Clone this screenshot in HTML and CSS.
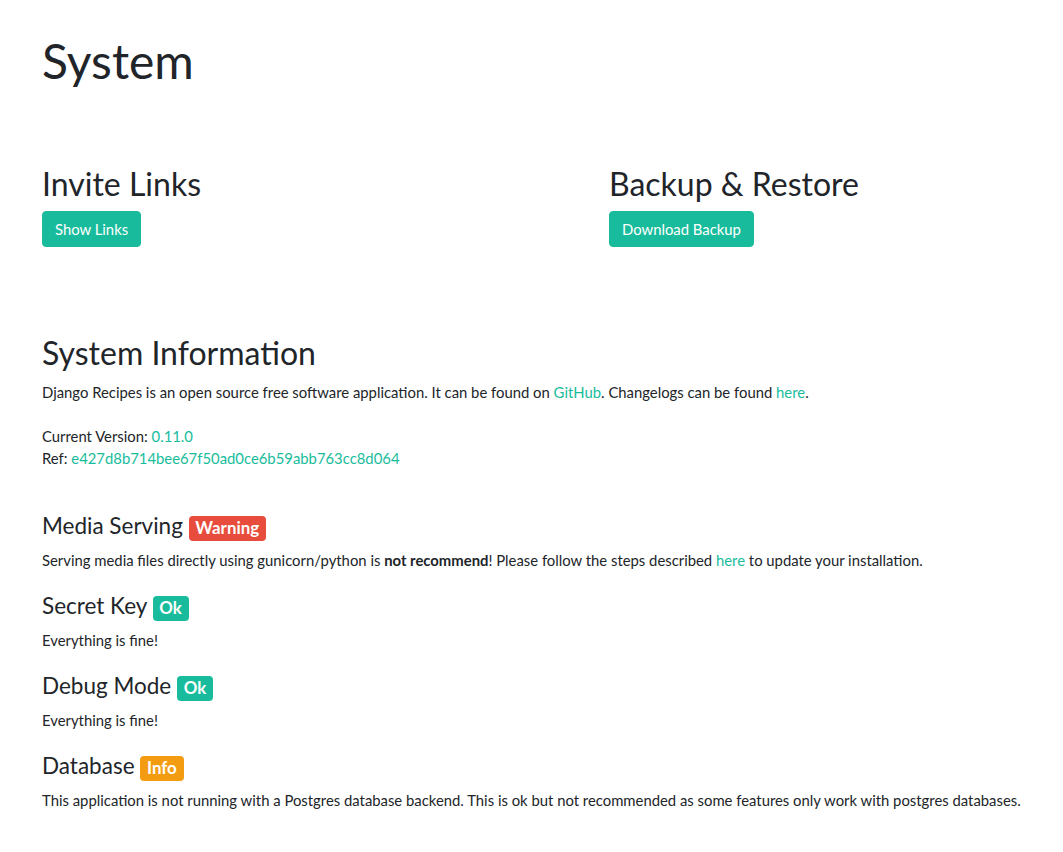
FILE: index.html
```html
<!DOCTYPE html>
<html lang="en">
<head>
<meta charset="utf-8">
<title>System</title>
<link rel="stylesheet" href="styles.css">
</head>
<body>
<main class="page">
  <h1 class="title">System</h1>

  <div class="top-row">
    <section class="col">
      <h3 class="h3">Invite Links</h3>
      <a class="btn" href="#">Show Links</a>
    </section>
    <section class="col">
      <h3 class="h3">Backup &amp; Restore</h3>
      <a class="btn" href="#">Download Backup</a>
    </section>
  </div>

  <section class="info">
    <h3 class="h3">System Information</h3>
    <p class="intro">Django Recipes is an open source free software application. It can be found on <a href="#" class="link">GitHub</a>. Changelogs can be found <a href="#" class="link">here</a>.</p>
    <p class="version">Current Version: <a href="#" class="link">0.11.0</a><br>Ref: <a href="#" class="link">e427d8b714bee67f50ad0ce6b59abb763cc8d064</a></p>
  </section>

  <section class="check first">
    <h4 class="h4">Media Serving <span class="badge badge-danger">Warning</span></h4>
    <p class="text">Serving media files directly using gunicorn/python is <b>not recommend</b>! Please follow the steps described <a href="#" class="link">here</a> to update your installation.</p>
  </section>

  <section class="check">
    <h4 class="h4">Secret Key <span class="badge badge-success">Ok</span></h4>
    <p class="text">Everything is fine!</p>
  </section>

  <section class="check">
    <h4 class="h4">Debug Mode <span class="badge badge-success">Ok</span></h4>
    <p class="text">Everything is fine!</p>
  </section>

  <section class="check">
    <h4 class="h4">Database <span class="badge badge-warning">Info</span></h4>
    <p class="text">This application is not running with a Postgres database backend. This is ok but not recommended as some features only work with postgres databases.</p>
  </section>
</main>
</body>
</html>
```

FILE: styles.css
```css
html, body {
  margin: 0;
  padding: 0;
  background: #ffffff;
}

body {
  font-family: Lato, "Noto Sans", "Liberation Sans", sans-serif;
  font-size: 14.85px;
  line-height: 22.5px;
  color: #212529;
}

.page {
  padding: 32px 10px 40px 42px;
}

.title {
  font-size: 48px;
  font-weight: 400;
  line-height: 1.2;
  margin: 0 0 8px 0;
}

.h3 {
  font-size: 32px;
  font-weight: 400;
  line-height: 1.2;
  margin: 0 0 8px 0;
}

.h4 {
  font-size: 22.5px;
  font-weight: 400;
  line-height: 1.2;
  margin: 0 0 8px 0;
}

.top-row {
  display: grid;
  grid-template-columns: 567px 1fr;
  margin-top: 75px;
}

.btn {
  display: inline-block;
  background: #18bc9c;
  color: #ffffff;
  text-decoration: none;
  font-size: 14.85px;
  line-height: 22.5px;
  padding: 6px 12px;
  border: 1px solid #18bc9c;
  border-radius: 4px;
}

.info {
  margin-top: 87px;
}

.intro {
  margin: 0 0 21.5px 0;
}

.version {
  margin: 0;
}

.link {
  color: #18bc9c;
  text-decoration: none;
}

.text b {
  font-weight: 700;
}

.check {
  margin-top: 20.5px;
}

.check.first {
  margin-top: 42px;
}

.text {
  margin: 0;
}

.badge {
  display: inline-block;
  font-size: 16.875px;
  font-weight: 700;
  line-height: 1;
  padding: 4.2px 6.75px;
  border-radius: 4px;
  color: #ffffff;
  vertical-align: baseline;
}

.badge-danger { background: #e74c3c; }
.badge-success { background: #18bc9c; }
.badge-warning { background: #f39c12; }
```
